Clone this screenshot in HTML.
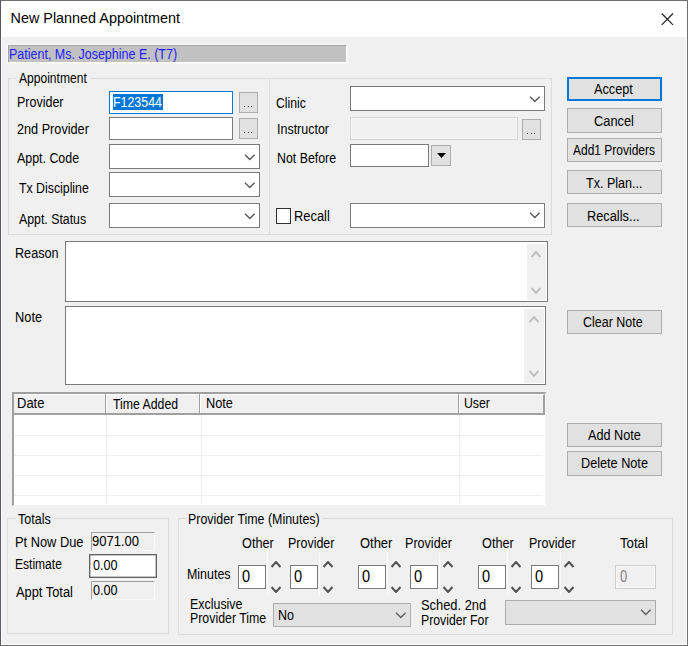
<!DOCTYPE html>
<html><head><meta charset="utf-8">
<style>
*{box-sizing:border-box;margin:0;padding:0}
html,body{width:688px;height:646px;overflow:hidden;background:#f0f0f0}
body{position:relative;font-family:"Liberation Sans",sans-serif;font-size:14px;color:#000}
.a{position:absolute}
.t{position:absolute;white-space:pre;line-height:16px;height:16px;transform-origin:0 0}
</style></head><body>
<div class="a" style="left:0px;top:0px;width:688px;height:646px;background:#fff"></div>
<div class="a" style="left:2px;top:37px;width:684px;height:607px;background:#f0f0f0"></div>
<div class="a" style="left:0px;top:0px;width:688px;height:1px;background:#6f6f6f"></div>
<div class="a" style="left:0px;top:0px;width:1px;height:646px;background:#565a60"></div>
<div class="a" style="left:687px;top:0px;width:1px;height:646px;background:#6f6f6f"></div>
<div class="a" style="left:0px;top:645px;width:688px;height:1px;background:#6f6f6f"></div>
<div class="t" style="left:10.5px;top:10px;font-size:14.4px;line-height:16px">New Planned Appointment</div>
<svg class="a" style="left:661px;top:13px" width="13" height="13" viewBox="0 0 13 13"><path d="M0.7 0.5L12 11.8M12 0.5L0.7 11.8" stroke="#222" stroke-width="1.2"/></svg>
<div class="a" style="left:7px;top:44px;width:341px;height:20px;background:#f8f8f8"></div>
<div class="a" style="left:8px;top:45px;width:339px;height:18px;background:#c1c1c1;border-top:1px solid #a6a6a6;border-left:1px solid #a6a6a6;border-right:1px solid #fff;border-bottom:1px solid #fff"></div>
<div class="a" style="left:8px;top:78px;width:544px;height:157px;border:1px solid #dcdcdc"></div>
<div class="a" style="left:269px;top:78px;width:1px;height:157px;background:#dcdcdc"></div>
<div class="a" style="left:16px;top:72px;width:75px;height:12px;background:#f0f0f0"></div>
<div class="a" style="left:109px;top:91px;width:124px;height:23px;background:#fff;border:1px solid #0078d7"></div>
<div class="a" style="left:113px;top:94px;width:50px;height:16px;background:#0078d7"></div>
<div class="a" style="left:239px;top:92px;width:19px;height:21px;background:#e1e1e1;border:1px solid #adadad"></div>
<div class="a" style="left:244px;top:106px;width:1px;height:1px;background:#3a3a3a"></div>
<div class="a" style="left:248px;top:106px;width:1px;height:1px;background:#3a3a3a"></div>
<div class="a" style="left:251px;top:106px;width:1px;height:1px;background:#3a3a3a"></div>
<div class="a" style="left:109px;top:117px;width:124px;height:23px;background:#fff;border:1px solid #7a7a7a"></div>
<div class="a" style="left:239px;top:118px;width:19px;height:21px;background:#e1e1e1;border:1px solid #adadad"></div>
<div class="a" style="left:244px;top:132px;width:1px;height:1px;background:#3a3a3a"></div>
<div class="a" style="left:248px;top:132px;width:1px;height:1px;background:#3a3a3a"></div>
<div class="a" style="left:251px;top:132px;width:1px;height:1px;background:#3a3a3a"></div>
<div class="a" style="left:109px;top:144px;width:151px;height:25px;background:#fff;border:1px solid #7a7a7a"></div>
<svg class="a" style="left:244px;top:154px" width="12" height="7" viewBox="0 0 12 7"><path d="M1 0.8L5.8 5.6L10.6 0.8" fill="none" stroke="#5a5a5a" stroke-width="1.4"/></svg>
<div class="a" style="left:109px;top:172px;width:151px;height:25px;background:#fff;border:1px solid #7a7a7a"></div>
<svg class="a" style="left:244px;top:182px" width="12" height="7" viewBox="0 0 12 7"><path d="M1 0.8L5.8 5.6L10.6 0.8" fill="none" stroke="#5a5a5a" stroke-width="1.4"/></svg>
<div class="a" style="left:109px;top:203px;width:151px;height:25px;background:#fff;border:1px solid #7a7a7a"></div>
<svg class="a" style="left:244px;top:213px" width="12" height="7" viewBox="0 0 12 7"><path d="M1 0.8L5.8 5.6L10.6 0.8" fill="none" stroke="#5a5a5a" stroke-width="1.4"/></svg>
<div class="a" style="left:350px;top:86px;width:195px;height:25px;background:#fff;border:1px solid #7a7a7a"></div>
<svg class="a" style="left:529px;top:96px" width="12" height="7" viewBox="0 0 12 7"><path d="M1 0.8L5.8 5.6L10.6 0.8" fill="none" stroke="#5a5a5a" stroke-width="1.4"/></svg>
<div class="a" style="left:350px;top:117px;width:168px;height:23px;background:#f0f0f0;border:1px solid #d4d4d4;box-shadow:inset 0 0 0 1px #f8f8f8"></div>
<div class="a" style="left:522px;top:119px;width:19px;height:21px;background:#e1e1e1;border:1px solid #adadad"></div>
<div class="a" style="left:527px;top:133px;width:1px;height:1px;background:#3a3a3a"></div>
<div class="a" style="left:531px;top:133px;width:1px;height:1px;background:#3a3a3a"></div>
<div class="a" style="left:534px;top:133px;width:1px;height:1px;background:#3a3a3a"></div>
<div class="a" style="left:350px;top:144px;width:79px;height:23px;background:#fff;border:1px solid #7a7a7a"></div>
<div class="a" style="left:431px;top:145px;width:20px;height:21px;background:#e1e1e1;border:1px solid #adadad"></div>
<svg class="a" style="left:437px;top:153px" width="9" height="6" viewBox="0 0 9 6"><path d="M0 0H9L4.5 5Z" fill="#000"/></svg>
<div class="a" style="left:276px;top:208px;width:15px;height:16px;background:#fff;border:1px solid #333"></div>
<div class="a" style="left:350px;top:203px;width:195px;height:25px;background:#fff;border:1px solid #7a7a7a"></div>
<svg class="a" style="left:529px;top:212px" width="12" height="7" viewBox="0 0 12 7"><path d="M1 0.8L5.8 5.6L10.6 0.8" fill="none" stroke="#5a5a5a" stroke-width="1.4"/></svg>
<div class="a" style="left:567px;top:77px;width:95px;height:24px;background:#e1e1e1;border:2px solid #0078d7"></div>
<div class="a" style="left:567px;top:108px;width:95px;height:25px;background:#e1e1e1;border:1px solid #adadad"></div>
<div class="a" style="left:567px;top:138px;width:95px;height:24px;background:#e1e1e1;border:1px solid #adadad"></div>
<div class="a" style="left:567px;top:170px;width:95px;height:24px;background:#e1e1e1;border:1px solid #adadad"></div>
<div class="a" style="left:567px;top:203px;width:95px;height:24px;background:#e1e1e1;border:1px solid #adadad"></div>
<div class="a" style="left:567px;top:310px;width:95px;height:24px;background:#e1e1e1;border:1px solid #adadad"></div>
<div class="a" style="left:567px;top:423px;width:95px;height:24px;background:#e1e1e1;border:1px solid #adadad"></div>
<div class="a" style="left:567px;top:451px;width:95px;height:25px;background:#e1e1e1;border:1px solid #adadad"></div>
<div class="a" style="left:65px;top:241px;width:483px;height:61px;background:#fff;border:1px solid #7a7a7a"></div>
<div class="a" style="left:527px;top:244px;width:19px;height:56px;background:#f0f0f0"></div>
<svg class="a" style="left:531px;top:251px" width="10" height="7" viewBox="0 0 10 7"><path d="M0.5 6L5.0 1L9.5 6" fill="none" stroke="#bdbdbd" stroke-width="1.9"/></svg>
<svg class="a" style="left:531px;top:287px" width="10" height="7" viewBox="0 0 10 7"><path d="M0.5 1L5.0 6L9.5 1" fill="none" stroke="#bdbdbd" stroke-width="1.9"/></svg>
<div class="a" style="left:65px;top:306px;width:481px;height:79px;background:#fff;border:1px solid #7a7a7a"></div>
<div class="a" style="left:524px;top:309px;width:20px;height:74px;background:#f0f0f0"></div>
<svg class="a" style="left:529px;top:316px" width="10" height="7" viewBox="0 0 10 7"><path d="M0.5 6L5.0 1L9.5 6" fill="none" stroke="#bdbdbd" stroke-width="1.9"/></svg>
<svg class="a" style="left:529px;top:370px" width="10" height="7" viewBox="0 0 10 7"><path d="M0.5 1L5.0 6L9.5 1" fill="none" stroke="#bdbdbd" stroke-width="1.9"/></svg>
<div class="a" style="left:12px;top:392px;width:534px;height:114px;background:#fff;border-top:2px solid #a0a0a0;border-left:2px solid #a0a0a0;border-right:1px solid #f4f4f4;border-bottom:1px solid #f4f4f4"></div>
<div class="a" style="left:14px;top:394px;width:531px;height:21px;background:#f0f0f0;border-top:1px solid #fff;border-bottom:2px solid #a0a0a0;border-right:2px solid #a0a0a0"></div>
<div class="a" style="left:105px;top:394px;width:1px;height:19px;background:#a0a0a0"></div>
<div class="a" style="left:106px;top:395px;width:1px;height:18px;background:#fff"></div>
<div class="a" style="left:199px;top:394px;width:1px;height:19px;background:#a0a0a0"></div>
<div class="a" style="left:200px;top:395px;width:1px;height:18px;background:#fff"></div>
<div class="a" style="left:458px;top:394px;width:1px;height:19px;background:#a0a0a0"></div>
<div class="a" style="left:459px;top:395px;width:1px;height:18px;background:#fff"></div>
<div class="a" style="left:106px;top:415px;width:1px;height:88px;background:#f0f0f0"></div>
<div class="a" style="left:201px;top:415px;width:1px;height:88px;background:#f0f0f0"></div>
<div class="a" style="left:459px;top:415px;width:1px;height:88px;background:#f0f0f0"></div>
<div class="a" style="left:14px;top:435px;width:529px;height:1px;background:#f0f0f0"></div>
<div class="a" style="left:14px;top:455px;width:529px;height:1px;background:#f0f0f0"></div>
<div class="a" style="left:14px;top:475px;width:529px;height:1px;background:#f0f0f0"></div>
<div class="a" style="left:14px;top:495px;width:529px;height:1px;background:#f0f0f0"></div>
<div class="a" style="left:7px;top:518px;width:162px;height:116px;border:1px solid #dcdcdc"></div>
<div class="a" style="left:16px;top:512px;width:38px;height:12px;background:#f0f0f0"></div>
<div class="a" style="left:91px;top:532px;width:64px;height:19px;background:#f0f0f0;border-top:1px solid #a0a0a0;border-left:1px solid #a0a0a0;border-right:1px solid #fafafa;border-bottom:1px solid #fafafa"></div>
<div class="a" style="left:89px;top:554px;width:68px;height:24px;background:#fff;border:1px solid #646464;box-shadow:inset 0 0 0 0.5px #8a8a8a"></div>
<div class="a" style="left:91px;top:581px;width:64px;height:19px;background:#f0f0f0;border-top:1px solid #a0a0a0;border-left:1px solid #a0a0a0;border-right:1px solid #fafafa;border-bottom:1px solid #fafafa"></div>
<div class="a" style="left:178px;top:518px;width:495px;height:117px;border:1px solid #dcdcdc"></div>
<div class="a" style="left:186px;top:512px;width:136px;height:12px;background:#f0f0f0"></div>
<div class="a" style="left:238px;top:565px;width:28px;height:24px;background:#fff;border:1px solid #7a7a7a"></div>
<div class="a" style="left:267px;top:553px;width:1px;height:42px;background:#fbfbfb"></div>
<svg class="a" style="left:271px;top:561px" width="10" height="7" viewBox="0 0 10 7"><path d="M0.5 6L5.0 1L9.5 6" fill="none" stroke="#505050" stroke-width="2.0"/></svg>
<svg class="a" style="left:271px;top:586px" width="10" height="7" viewBox="0 0 10 7"><path d="M0.5 1L5.0 6L9.5 1" fill="none" stroke="#505050" stroke-width="2.0"/></svg>
<div class="a" style="left:290px;top:565px;width:28px;height:24px;background:#fff;border:1px solid #7a7a7a"></div>
<div class="a" style="left:319px;top:553px;width:1px;height:42px;background:#fbfbfb"></div>
<svg class="a" style="left:323px;top:561px" width="10" height="7" viewBox="0 0 10 7"><path d="M0.5 6L5.0 1L9.5 6" fill="none" stroke="#505050" stroke-width="2.0"/></svg>
<svg class="a" style="left:323px;top:586px" width="10" height="7" viewBox="0 0 10 7"><path d="M0.5 1L5.0 6L9.5 1" fill="none" stroke="#505050" stroke-width="2.0"/></svg>
<div class="a" style="left:358px;top:565px;width:28px;height:24px;background:#fff;border:1px solid #7a7a7a"></div>
<div class="a" style="left:387px;top:553px;width:1px;height:42px;background:#fbfbfb"></div>
<svg class="a" style="left:391px;top:561px" width="10" height="7" viewBox="0 0 10 7"><path d="M0.5 6L5.0 1L9.5 6" fill="none" stroke="#505050" stroke-width="2.0"/></svg>
<svg class="a" style="left:391px;top:586px" width="10" height="7" viewBox="0 0 10 7"><path d="M0.5 1L5.0 6L9.5 1" fill="none" stroke="#505050" stroke-width="2.0"/></svg>
<div class="a" style="left:410px;top:565px;width:28px;height:24px;background:#fff;border:1px solid #7a7a7a"></div>
<div class="a" style="left:439px;top:553px;width:1px;height:42px;background:#fbfbfb"></div>
<svg class="a" style="left:443px;top:561px" width="10" height="7" viewBox="0 0 10 7"><path d="M0.5 6L5.0 1L9.5 6" fill="none" stroke="#505050" stroke-width="2.0"/></svg>
<svg class="a" style="left:443px;top:586px" width="10" height="7" viewBox="0 0 10 7"><path d="M0.5 1L5.0 6L9.5 1" fill="none" stroke="#505050" stroke-width="2.0"/></svg>
<div class="a" style="left:478px;top:565px;width:28px;height:24px;background:#fff;border:1px solid #7a7a7a"></div>
<div class="a" style="left:507px;top:553px;width:1px;height:42px;background:#fbfbfb"></div>
<svg class="a" style="left:511px;top:561px" width="10" height="7" viewBox="0 0 10 7"><path d="M0.5 6L5.0 1L9.5 6" fill="none" stroke="#505050" stroke-width="2.0"/></svg>
<svg class="a" style="left:511px;top:586px" width="10" height="7" viewBox="0 0 10 7"><path d="M0.5 1L5.0 6L9.5 1" fill="none" stroke="#505050" stroke-width="2.0"/></svg>
<div class="a" style="left:531px;top:565px;width:28px;height:24px;background:#fff;border:1px solid #7a7a7a"></div>
<div class="a" style="left:560px;top:553px;width:1px;height:42px;background:#fbfbfb"></div>
<svg class="a" style="left:564px;top:561px" width="10" height="7" viewBox="0 0 10 7"><path d="M0.5 6L5.0 1L9.5 6" fill="none" stroke="#505050" stroke-width="2.0"/></svg>
<svg class="a" style="left:564px;top:586px" width="10" height="7" viewBox="0 0 10 7"><path d="M0.5 1L5.0 6L9.5 1" fill="none" stroke="#505050" stroke-width="2.0"/></svg>
<div class="a" style="left:615px;top:565px;width:41px;height:24px;background:#f0f0f0;border:1px solid #cccccc;box-shadow:inset 0 0 0 1px #f8f8f8"></div>
<div class="a" style="left:273px;top:603px;width:138px;height:24px;background:#e1e1e1;border:1px solid #adadad"></div>
<svg class="a" style="left:395px;top:612px" width="12" height="7" viewBox="0 0 12 7"><path d="M1 0.8L5.8 5.6L10.6 0.8" fill="none" stroke="#606060" stroke-width="1.4"/></svg>
<div class="a" style="left:505px;top:600px;width:151px;height:25px;background:#e1e1e1;border:1px solid #adadad"></div>
<svg class="a" style="left:640px;top:609px" width="12" height="7" viewBox="0 0 12 7"><path d="M1 0.8L5.8 5.6L10.6 0.8" fill="none" stroke="#606060" stroke-width="1.4"/></svg>
<div class="t" style="left:8.71px;top:46.00px;transform:scale(0.8925,1.0);color:#1c1cff">Patient, Ms. Josephine E. (T7)</div>
<div class="t" style="left:18.70px;top:70.30px;transform:scale(0.8620,1.0);">Appointment</div>
<div class="t" style="left:16.81px;top:94.05px;transform:scale(0.8922,1.0);">Provider</div>
<div class="t" style="left:16.79px;top:121.20px;transform:scale(0.9051,1.0);">2nd Provider</div>
<div class="t" style="left:17.30px;top:150.10px;transform:scale(0.8857,1.0);">Appt. Code</div>
<div class="t" style="left:19.10px;top:180.40px;transform:scale(0.8797,1.0);">Tx Discipline</div>
<div class="t" style="left:19.10px;top:210.70px;transform:scale(0.8803,1.0);">Appt. Status</div>
<div class="t" style="left:113.11px;top:94.10px;transform:scale(0.8852,1.0);color:#fff">F123544</div>
<div class="t" style="left:275.83px;top:95.10px;transform:scale(0.8727,1.0);">Clinic</div>
<div class="t" style="left:276.71px;top:121.40px;transform:scale(0.8912,1.0);">Instructor</div>
<div class="t" style="left:276.72px;top:149.60px;transform:scale(0.8818,1.0);">Not Before</div>
<div class="t" style="left:294.08px;top:208.40px;transform:scale(0.9189,1.0);">Recall</div>
<div class="t" style="left:594.00px;top:81.20px;transform:scale(0.9070,1.0);">Accept</div>
<div class="t" style="left:593.88px;top:112.90px;transform:scale(0.9167,1.0);">Cancel</div>
<div class="t" style="left:573.00px;top:142.40px;transform:scale(0.8568,1.0);">Add1 Providers</div>
<div class="t" style="left:586.20px;top:174.50px;transform:scale(0.8968,1.0);">Tx. Plan...</div>
<div class="t" style="left:587.29px;top:207.70px;transform:scale(0.9125,1.0);">Recalls...</div>
<div class="t" style="left:14.70px;top:244.80px;transform:scale(0.9021,1.0);">Reason</div>
<div class="t" style="left:14.68px;top:309.40px;transform:scale(0.9179,1.0);">Note</div>
<div class="t" style="left:583.11px;top:314.40px;transform:scale(0.8909,1.0);">Clear Note</div>
<div class="t" style="left:17.07px;top:395.30px;transform:scale(0.9286,1.0);">Date</div>
<div class="t" style="left:113.00px;top:395.60px;transform:scale(0.8770,1.0);">Time Added</div>
<div class="t" style="left:205.59px;top:395.30px;transform:scale(0.9107,1.0);">Note</div>
<div class="t" style="left:463.72px;top:395.30px;transform:scale(0.8759,1.0);">User</div>
<div class="t" style="left:588.00px;top:427.00px;transform:scale(0.9034,1.0);">Add Note</div>
<div class="t" style="left:580.59px;top:455.30px;transform:scale(0.9055,1.0);">Delete Note</div>
<div class="t" style="left:18.20px;top:510.60px;transform:scale(0.8944,1.0);">Totals</div>
<div class="t" style="left:14.78px;top:534.40px;transform:scale(0.9164,1.0);">Pt Now Due</div>
<div class="t" style="left:14.84px;top:556.40px;transform:scale(0.8604,1.0);">Estimate</div>
<div class="t" style="left:15.70px;top:583.50px;transform:scale(0.9180,1.0);">Appt Total</div>
<div class="t" style="left:92.07px;top:533.00px;transform:scale(0.9286,1.0);">9071.00</div>
<div class="t" style="left:93.40px;top:557.40px;transform:scale(0.9037,1.0);">0.00</div>
<div class="t" style="left:93.40px;top:582.30px;transform:scale(0.9037,1.0);">0.00</div>
<div class="t" style="left:187.91px;top:511.00px;transform:scale(0.8857,1.0);">Provider Time (Minutes)</div>
<div class="t" style="left:242.39px;top:535.40px;transform:scale(0.9088,1.0);">Other</div>
<div class="t" style="left:288.41px;top:535.40px;transform:scale(0.8902,1.0);">Provider</div>
<div class="t" style="left:359.98px;top:535.40px;transform:scale(0.9235,1.0);">Other</div>
<div class="t" style="left:404.50px;top:535.40px;transform:scale(0.8980,1.0);">Provider</div>
<div class="t" style="left:482.49px;top:535.40px;transform:scale(0.9088,1.0);">Other</div>
<div class="t" style="left:528.61px;top:535.40px;transform:scale(0.8941,1.0);">Provider</div>
<div class="t" style="left:620.20px;top:535.40px;transform:scale(0.9414,1.0);">Total</div>
<div class="t" style="left:186.51px;top:566.30px;transform:scale(0.8875,1.0);">Minutes</div>
<div class="t" style="left:190.21px;top:595.60px;transform:scale(0.8879,1.0);">Exclusive</div>
<div class="t" style="left:190.22px;top:610.30px;transform:scale(0.8824,1.0);">Provider Time</div>
<div class="t" style="left:277.91px;top:607.30px;transform:scale(0.8938,1.0);">No</div>
<div class="t" style="left:421.38px;top:596.70px;transform:scale(0.9203,1.0);">Sched. 2nd</div>
<div class="t" style="left:421.42px;top:611.60px;transform:scale(0.8763,1.0);">Provider For</div>
<div class="t" style="left:241.70px;top:566.82px;transform:scale(1.0429,1.16);">0</div>
<div class="t" style="left:293.70px;top:566.82px;transform:scale(1.0429,1.16);">0</div>
<div class="t" style="left:361.70px;top:566.82px;transform:scale(1.0429,1.16);">0</div>
<div class="t" style="left:413.70px;top:566.82px;transform:scale(1.0429,1.16);">0</div>
<div class="t" style="left:481.70px;top:566.82px;transform:scale(1.0429,1.16);">0</div>
<div class="t" style="left:534.70px;top:566.82px;transform:scale(1.0429,1.16);">0</div>
<div class="t" style="left:619.50px;top:566.92px;transform:scale(0.9286,1.16);color:#838383">0</div>
</body></html>
